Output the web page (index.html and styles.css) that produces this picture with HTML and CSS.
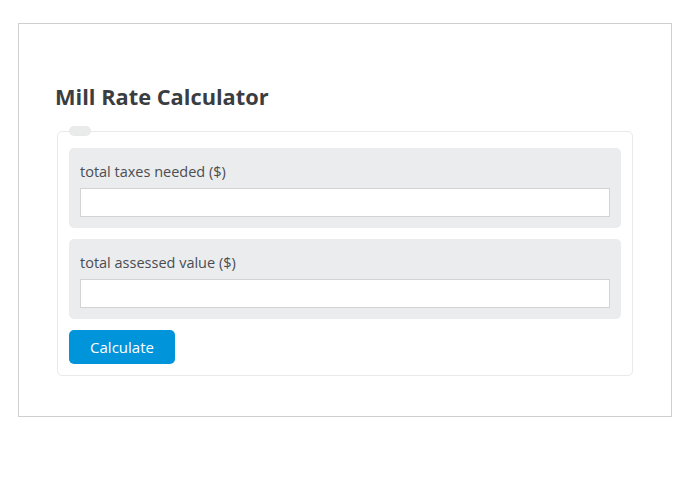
FILE: index.html
```html
<!DOCTYPE html>
<html>
<head>
<meta charset="utf-8">
<link rel="stylesheet" href="styles.css">
</head>
<body>
<div class="page">
  <h1 class="title">Mill Rate Calculator</h1>
  <div class="calc">
    <div class="legend"></div>
    <div class="field">
      <label class="label">total taxes needed ($)</label>
      <input class="input" type="text">
    </div>
    <div class="field">
      <label class="label">total assessed value ($)</label>
      <input class="input" type="text">
    </div>
    <button class="btn">Calculate</button>
  </div>
</div>
</body>
</html>
```
FILE: styles.css
```css
html, body { margin: 0; padding: 0; background: #fff; }
body { font-family: "Open Sans", "Noto Sans", sans-serif; }
.page {
  box-sizing: border-box;
  margin: 23px 0 0 18px;
  width: 654px;
  height: 394px;
  border: 1px solid #cfcfcf;
  padding: 58px 37px 0 37px;
}
.title {
  margin: 0 0 0 -1px;
  font-size: 21.8px;
  line-height: 30px;
  font-weight: 700;
  color: #3a3d42;
}
.calc {
  position: relative;
  margin: 19px 0 0 1px;
  box-sizing: border-box;
  width: 576px;
  border: 1px solid #e8e9e9;
  border-radius: 5px;
  padding: 16px 11px 11px 11px;
  display: flex;
  flex-direction: column;
  gap: 11px;
  align-items: flex-start;
}
.legend {
  position: absolute;
  left: 11px;
  top: -6px;
  width: 22px;
  height: 10px;
  border-radius: 5px;
  background: #e9ebeb;
}
.field {
  align-self: stretch;
  background: #ebeced;
  border-radius: 5px;
  padding: 13px 11px 11px 11px;
  display: flex;
  flex-direction: column;
  gap: 5px;
}
.label {
  font-size: 14.5px;
  line-height: 22px;
  color: #4a4d52;
}
.input {
  box-sizing: border-box;
  height: 29px;
  width: 100%;
  margin: 0;
  border: 1px solid #d3d3d3;
  background: #fff;
  outline: none;
}
.btn {
  box-sizing: border-box;
  width: 106px;
  height: 34px;
  border: none;
  border-radius: 5px;
  background: #0095da;
  color: #fff;
  font-family: "Open Sans", "Noto Sans", sans-serif;
  font-size: 15px;
  padding: 0;
  cursor: pointer;
}
```
